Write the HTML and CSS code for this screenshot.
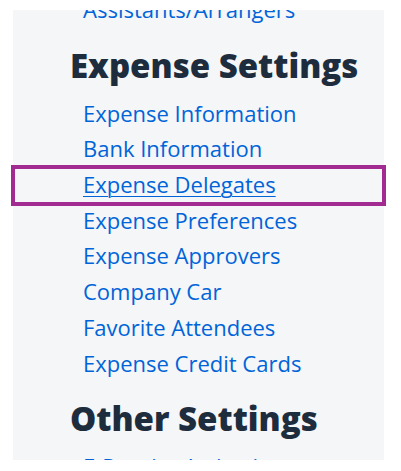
FILE: index.html
```html
<!DOCTYPE html>
<html lang="en">
<head>
<meta charset="utf-8">
<title>Settings</title>
<link rel="stylesheet" href="styles.css">
</head>
<body>
<div class="panel">
  <div class="content">
    <ul class="links first">
      <li><a href="#">Assistants/Arrangers</a></li>
    </ul>
    <h2 class="heading">Expense Settings</h2>
    <ul class="links">
      <li><a href="#">Expense Information</a></li>
      <li><a href="#">Bank Information</a></li>
      <li class="selected"><a href="#">Expense Delegates</a></li>
      <li><a href="#">Expense Preferences</a></li>
      <li><a href="#">Expense Approvers</a></li>
      <li><a href="#">Company Car</a></li>
      <li><a href="#">Favorite Attendees</a></li>
      <li><a href="#">Expense Credit Cards</a></li>
    </ul>
    <h2 class="heading">Other Settings</h2>
    <ul class="links">
      <li><a href="#">E-Receipt Activation</a></li>
    </ul>
  </div>
</div>
</body>
</html>
```
FILE: styles.css
```css
html, body {
  margin: 0;
  padding: 0;
  background: #ffffff;
}
body {
  padding: 10px 0 0 13px;
  font-family: "Open Sans", "Noto Sans", sans-serif;
}
.panel {
  display: flow-root;
  width: 371px;
  height: 450px;
  background: #f5f6f7;
  overflow-x: visible;
  overflow-y: clip;
}
.content {
  margin-top: -18px;
  padding-left: 57px;
}
.heading {
  margin: 18px 0 10px 0;
  font-size: 33px;
  line-height: 40px;
  font-weight: 800;
  color: #1d2d3e;
  letter-spacing: 0;
}
.links {
  list-style: none;
  margin: 0;
  padding: 0 0 0 13px;
}
.links li {
  position: relative;
  height: 35.7px;
  line-height: 35.7px;
  font-size: 22px;
}
.links a {
  color: #0064d9;
  text-decoration: none;
}
.links li.selected a {
  text-decoration: underline;
  text-underline-offset: 3px;
  text-decoration-thickness: 1px;
}
.links li.selected::after {
  content: "";
  position: absolute;
  left: -72px;
  width: 367px;
  top: -2px;
  height: 33px;
  border: 4px solid #a12b91;
}
```
